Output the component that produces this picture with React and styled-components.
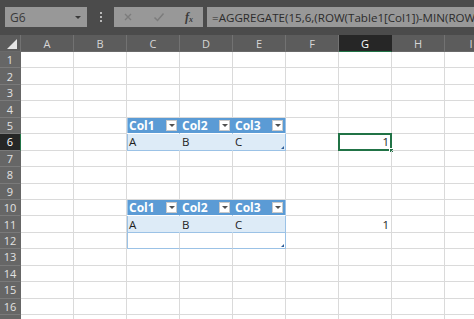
import React from 'react';
import styled, { createGlobalStyle, css } from 'styled-components';

const GlobalStyle = createGlobalStyle`
    html, body {
        margin: 0;
        padding: 0;
        background: #ffffff;
        overflow: hidden;
    }
    #root {
        width: 474px;
        height: 319px;
        overflow: hidden;
    }
`

const Page = styled.div`
    width: 474px;
    height: 319px;
    overflow: hidden;
    display: flex;
    flex-direction: column;
    background: #ffffff;
    font-family: "Open Sans", "Liberation Sans", sans-serif;
`

const Toolbar = styled.div`
    height: 35px;
    flex: none;
    background: #4b4b4b;
    display: flex;
    align-items: center;
    padding: 0 0 1px 5px;
    box-sizing: border-box;
`

const NameBox = styled.div`
    width: 82px;
    height: 20px;
    background: #989898;
    display: flex;
    align-items: center;
    justify-content: space-between;
    padding: 0 6px 0 5px;
    box-sizing: border-box;
    font-size: 12px;
    color: #3a3a3a;
`

const Caret = styled.span`
    width: 0;
    height: 0;
    border-left: 3px solid transparent;
    border-right: 3px solid transparent;
    border-top: 3px solid #3a3a3a;
`

const Dots = styled.div`
    width: 27px;
    display: flex;
    flex-direction: column;
    align-items: center;
    gap: 2px;

    span {
        width: 2px;
        height: 2px;
        background: #b8b8b8;
    }
`

const FnBox = styled.div`
    width: 89px;
    height: 20px;
    background: #989898;
    display: flex;
    align-items: center;
    justify-content: space-between;
    padding: 0 10px 0 9px;
    box-sizing: border-box;
`

const FxLabel = styled.span`
    font-family: "Liberation Serif", serif;
    font-style: italic;
    font-weight: bold;
    font-size: 12px;
    color: #3a3a3a;

    sub {
        font-size: 8px;
        vertical-align: -1px;
    }
`

const FormulaBar = styled.div`
    flex: 1;
    height: 20px;
    margin-left: 4px;
    background: #989898;
    display: flex;
    align-items: center;
    padding-left: 5px;
    font-size: 11.6px;
    color: #2c2c2c;
    white-space: nowrap;
    overflow: hidden;
`

const Sheet = styled.div`
    display: grid;
    grid-template-columns: 21px repeat(9, 53px);
    grid-template-rows: 17px repeat(17, 16.45px);
    width: 498px;
`

const ColHeader = styled.div`
    background: ${p => p.$active ? '#262626' : '#5c5c5c'};
    color: ${p => p.$active ? '#ffffff' : '#d6d6d6'};
    border-right: 1px solid ${p => p.$active ? '#262626' : '#727272'};
    border-bottom: 1px solid ${p => p.$active ? '#217346' : '#6a6a6a'};
    box-sizing: border-box;
    font-size: 11px;
    display: flex;
    align-items: center;
    justify-content: center;
`

const Corner = styled(ColHeader)`
    position: relative;

    &::after {
        content: "";
        position: absolute;
        right: 3px;
        bottom: 2px;
        border-left: 10px solid transparent;
        border-bottom: 10px solid #e6e6e6;
    }
`

const RowHeader = styled.div`
    background: ${p => p.$active ? '#262626' : '#666666'};
    color: ${p => p.$active ? '#ffffff' : '#e2e2e2'};
    border-bottom: 1px solid #7a7a7a;
    border-right: 1px solid ${p => p.$active ? '#217346' : '#666666'};
    box-sizing: border-box;
    font-size: 11px;
    display: flex;
    align-items: center;
    justify-content: center;
`

const Cell = styled.div`
    position: relative;
    box-sizing: border-box;
    border-right: 1px solid #dadada;
    border-bottom: 1px solid #dadada;
    font-family: "Open Sans", "Liberation Sans", sans-serif;
    font-size: 11.5px;
    color: #1e1e1e;
    display: flex;
    align-items: center;
    padding: 0 2px;
    white-space: nowrap;
    justify-content: ${p => p.$right ? 'flex-end' : 'flex-start'};

    ${p => p.$kind === 'head' && css`
        background: #5b9bd5;
        border-right-color: #5b9bd5;
        border-bottom-color: #ffffff;
        color: #ffffff;
        font-weight: bold;
        font-size: 12px;
        justify-content: space-between;
        padding: 0 2px 0 2px;
    `}

    ${p => p.$kind === 'band' && css`
        background: #ddebf7;
        border-right-color: #ddebf7;
        border-bottom-color: #9bc2e6;
    `}

    ${p => p.$kind === 'plain' && css`
        border-bottom-color: #9bc2e6;
    `}

    ${p => p.$kind && p.$edge === 'left' && css`
        box-shadow: inset 1px 0 0 #9bc2e6;
    `}

    ${p => p.$kind && p.$edge === 'right' && css`
        border-right-color: #9bc2e6;
    `}

    ${p => p.$resize && css`
        &::after {
            content: "";
            position: absolute;
            right: 1px;
            bottom: 1px;
            border-left: 3px solid transparent;
            border-bottom: 3px solid #2f5f9a;
        }
    `}

    ${p => p.$selected && css`
        &::before {
            content: "";
            position: absolute;
            left: -1px;
            top: -1px;
            right: -1px;
            bottom: -1px;
            border: 2px solid #217346;
        }
        &::after {
            content: "";
            position: absolute;
            right: -3px;
            bottom: -3px;
            width: 5px;
            height: 5px;
            background: #217346;
            border: 1px solid #ffffff;
            box-sizing: border-box;
        }
    `}
`

const FilterButton = styled.span`
    width: 11px;
    height: 11px;
    background: #ffffff;
    border: 1px solid #c9c9c9;
    box-sizing: border-box;
    display: flex;
    align-items: center;
    justify-content: center;

    &::after {
        content: "";
        border-left: 3px solid transparent;
        border-right: 3px solid transparent;
        border-top: 3px solid #505050;
    }
`

const columns = ['A', 'B', 'C', 'D', 'E', 'F', 'G', 'H', 'I'];
const rows = Array.from({ length: 17 }, (_, i) => i + 1);

const tables = [
    { header: 5, rows: [6] },
    { header: 10, rows: [11, 12] },
];

const values = { 'G6': '1', 'G11': '1' };

function cellInfo(col, row) {
    const ci = columns.indexOf(col);
    for (const t of tables) {
        if (ci < 2 || ci > 4) continue;
        const last = t.rows[t.rows.length - 1];
        const edge = ci === 2 ? 'left' : ci === 4 ? 'right' : null;
        if (row === t.header) {
            return { kind: 'head', text: `Col${ci - 1}`, edge };
        }
        if (t.rows.includes(row)) {
            const band = (row - t.header) % 2 === 1;
            return {
                kind: band ? 'band' : 'plain',
                text: row === t.header + 1 ? ['A', 'B', 'C'][ci - 2] : '',
                edge,
                resize: row === last && ci === 4,
            };
        }
    }
    return { kind: null, text: values[col + row] || '' };
}

const App = () => {
    return (
        <>
            <GlobalStyle />
            <Page>
                <Toolbar>
                    <NameBox>G6<Caret /></NameBox>
                    <Dots><span /><span /><span /></Dots>
                    <FnBox>
                        <svg width="10" height="10" viewBox="0 0 10 10">
                            <path d="M2 2 L8 8 M8 2 L2 8" stroke="#7c7c7c" strokeWidth="1.4" />
                        </svg>
                        <svg width="12" height="10" viewBox="0 0 12 10">
                            <path d="M1.5 5.5 L4.5 8.5 L10.5 1.5" stroke="#7c7c7c" strokeWidth="1.5" fill="none" />
                        </svg>
                        <FxLabel>f<sub>x</sub></FxLabel>
                    </FnBox>
                    <FormulaBar>=AGGREGATE(15,6,(ROW(Table1[Col1])-MIN(ROW(Table1[Col1]))+1)/(Table1[Col1]&lt;&gt;""),1)</FormulaBar>
                </Toolbar>
                <Sheet>
                    <Corner />
                    {columns.map(c => (
                        <ColHeader key={c} $active={c === 'G'}>{c}</ColHeader>
                    ))}
                    {rows.map(r => (
                        <React.Fragment key={r}>
                            <RowHeader $active={r === 6}>{r}</RowHeader>
                            {columns.map(c => {
                                const info = cellInfo(c, r);
                                return (
                                    <Cell
                                        key={c + r}
                                        $kind={info.kind}
                                        $edge={info.edge}
                                        $resize={info.resize}
                                        $right={!info.kind && info.text !== ''}
                                        $selected={c === 'G' && r === 6}
                                    >
                                        {info.kind === 'head' ? (
                                            <>
                                                <span>{info.text}</span>
                                                <FilterButton />
                                            </>
                                        ) : info.text}
                                    </Cell>
                                );
                            })}
                        </React.Fragment>
                    ))}
                </Sheet>
            </Page>
        </>
    );
}

export default App
